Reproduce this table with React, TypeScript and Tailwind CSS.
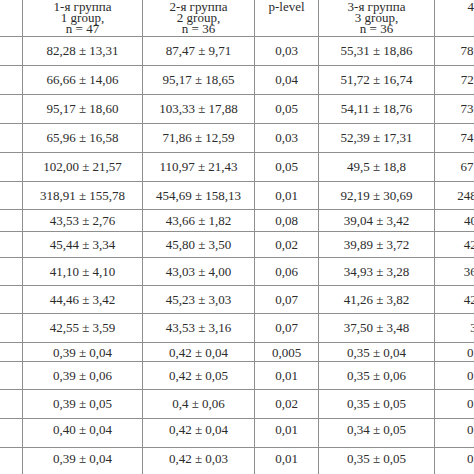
import React from 'react'

interface Row {
  h: string;
  top?: string;
  cells: string[];
}

const rows: Row[] = [
  { h: "h-[29px]", cells: ["82,28 ± 13,31", "87,47 ± 9,71", "0,03", "55,31 ± 18,86", "78,12 ± 14,20"] },
  { h: "h-[29px]", cells: ["66,66 ± 14,06", "95,17 ± 18,65", "0,04", "51,72 ± 16,74", "72,35 ± 15,11"] },
  { h: "h-[29px]", cells: ["95,17 ± 18,60", "103,33 ± 17,88", "0,05", "54,11 ± 18,76", "73,40 ± 16,02"] },
  { h: "h-[29px]", cells: ["65,96 ± 16,58", "71,86 ± 12,59", "0,03", "52,39 ± 17,31", "74,18 ± 13,44"] },
  { h: "h-[29px]", cells: ["102,00 ± 21,57", "110,97 ± 21,43", "0,05", "49,5 ± 18,8", "67,92 ± 19,30"] },
  { h: "h-[28px]", cells: ["318,91 ± 155,78", "454,69 ± 158,13", "0,01", "92,19 ± 30,69", "248,17 ± 120,4"] },
  { h: "h-[22px]", cells: ["43,53 ± 2,76", "43,66 ± 1,82", "0,08", "39,04 ± 3,42", "40,11 ± 2,90"] },
  { h: "h-[26px]", cells: ["45,44 ± 3,34", "45,80 ± 3,50", "0,02", "39,89 ± 3,72", "42,30 ± 3,15"] },
  { h: "h-[28px]", cells: ["41,10 ± 4,10", "43,03 ± 4,00", "0,06", "34,93 ± 3,28", "36,80 ± 3,61"] },
  { h: "h-[28px]", cells: ["44,46 ± 3,42", "45,23 ± 3,03", "0,07", "41,26 ± 3,82", "42,15 ± 3,40"] },
  { h: "h-[29px]", cells: ["42,55 ± 3,59", "43,53 ± 3,16", "0,07", "37,50 ± 3,48", "39,9 ± 3,4"] },
  { h: "h-[19px]", cells: ["0,39 ± 0,04", "0,42 ± 0,04", "0,005", "0,35 ± 0,04", "0,37 ± 0,05"] },
  { h: "h-[28px]", cells: ["0,39 ± 0,06", "0,42 ± 0,05", "0,01", "0,35 ± 0,06", "0,38 ± 0,05"] },
  { h: "h-[29px]", cells: ["0,39 ± 0,05", "0,4 ± 0,06", "0,02", "0,35 ± 0,05", "0,37 ± 0,04"] },
  { h: "h-[29px]", top: "pt-[1px]", cells: ["0,40 ± 0,04", "0,42 ± 0,04", "0,01", "0,34 ± 0,05", "0,38 ± 0,05"] },
  { h: "h-[40px]", top: "pt-[1px]", cells: ["0,39 ± 0,04", "0,42 ± 0,03", "0,01", "0,35 ± 0,05", "0,37 ± 0,04"] },
];

const grid = "grid grid-cols-[23px_120px_112px_64px_116px_124px]";
const cell = "border-r border-[#8f8f8f] text-center whitespace-nowrap";

export default function App() {
  return (
    <div
      className="w-[474px] h-[474px] overflow-hidden bg-white text-[#2b2b2b] text-[13px]"
      style={{ fontFamily: '"Liberation Serif", "DejaVu Serif", serif' }}
    >
      <div className="w-[560px]">
        <div className={`${grid} h-[37px] border-b border-[#8f8f8f] leading-[11px]`}>
          <div className={cell}></div>
          <div className={`${cell} pt-[1px]`}>
            1-я группа<br />1 group,<br />n = 47
          </div>
          <div className={`${cell} pt-[1px]`}>
            2-я группа<br />2 group,<br />n = 36
          </div>
          <div className={`${cell} pt-[1px]`}>p-level</div>
          <div className={`${cell} pt-[1px]`}>
            3-я группа<br />3 group,<br />n = 36
          </div>
          <div className={`${cell} pt-[1px]`}>
            4-я группа<br />4 group,<br />n = 37
          </div>
        </div>
        {rows.map((row, i) => (
          <div key={i} className={`${grid} ${row.h} border-b border-[#8f8f8f]`}>
            <div className={cell}></div>
            {row.cells.map((c, j) => (
              <div
                key={j}
                className={`${cell} flex justify-center ${row.top ? `items-start ${row.top}` : "items-center"}`}
              >
                {c}
              </div>
            ))}
          </div>
        ))}
      </div>
    </div>
  );
}
